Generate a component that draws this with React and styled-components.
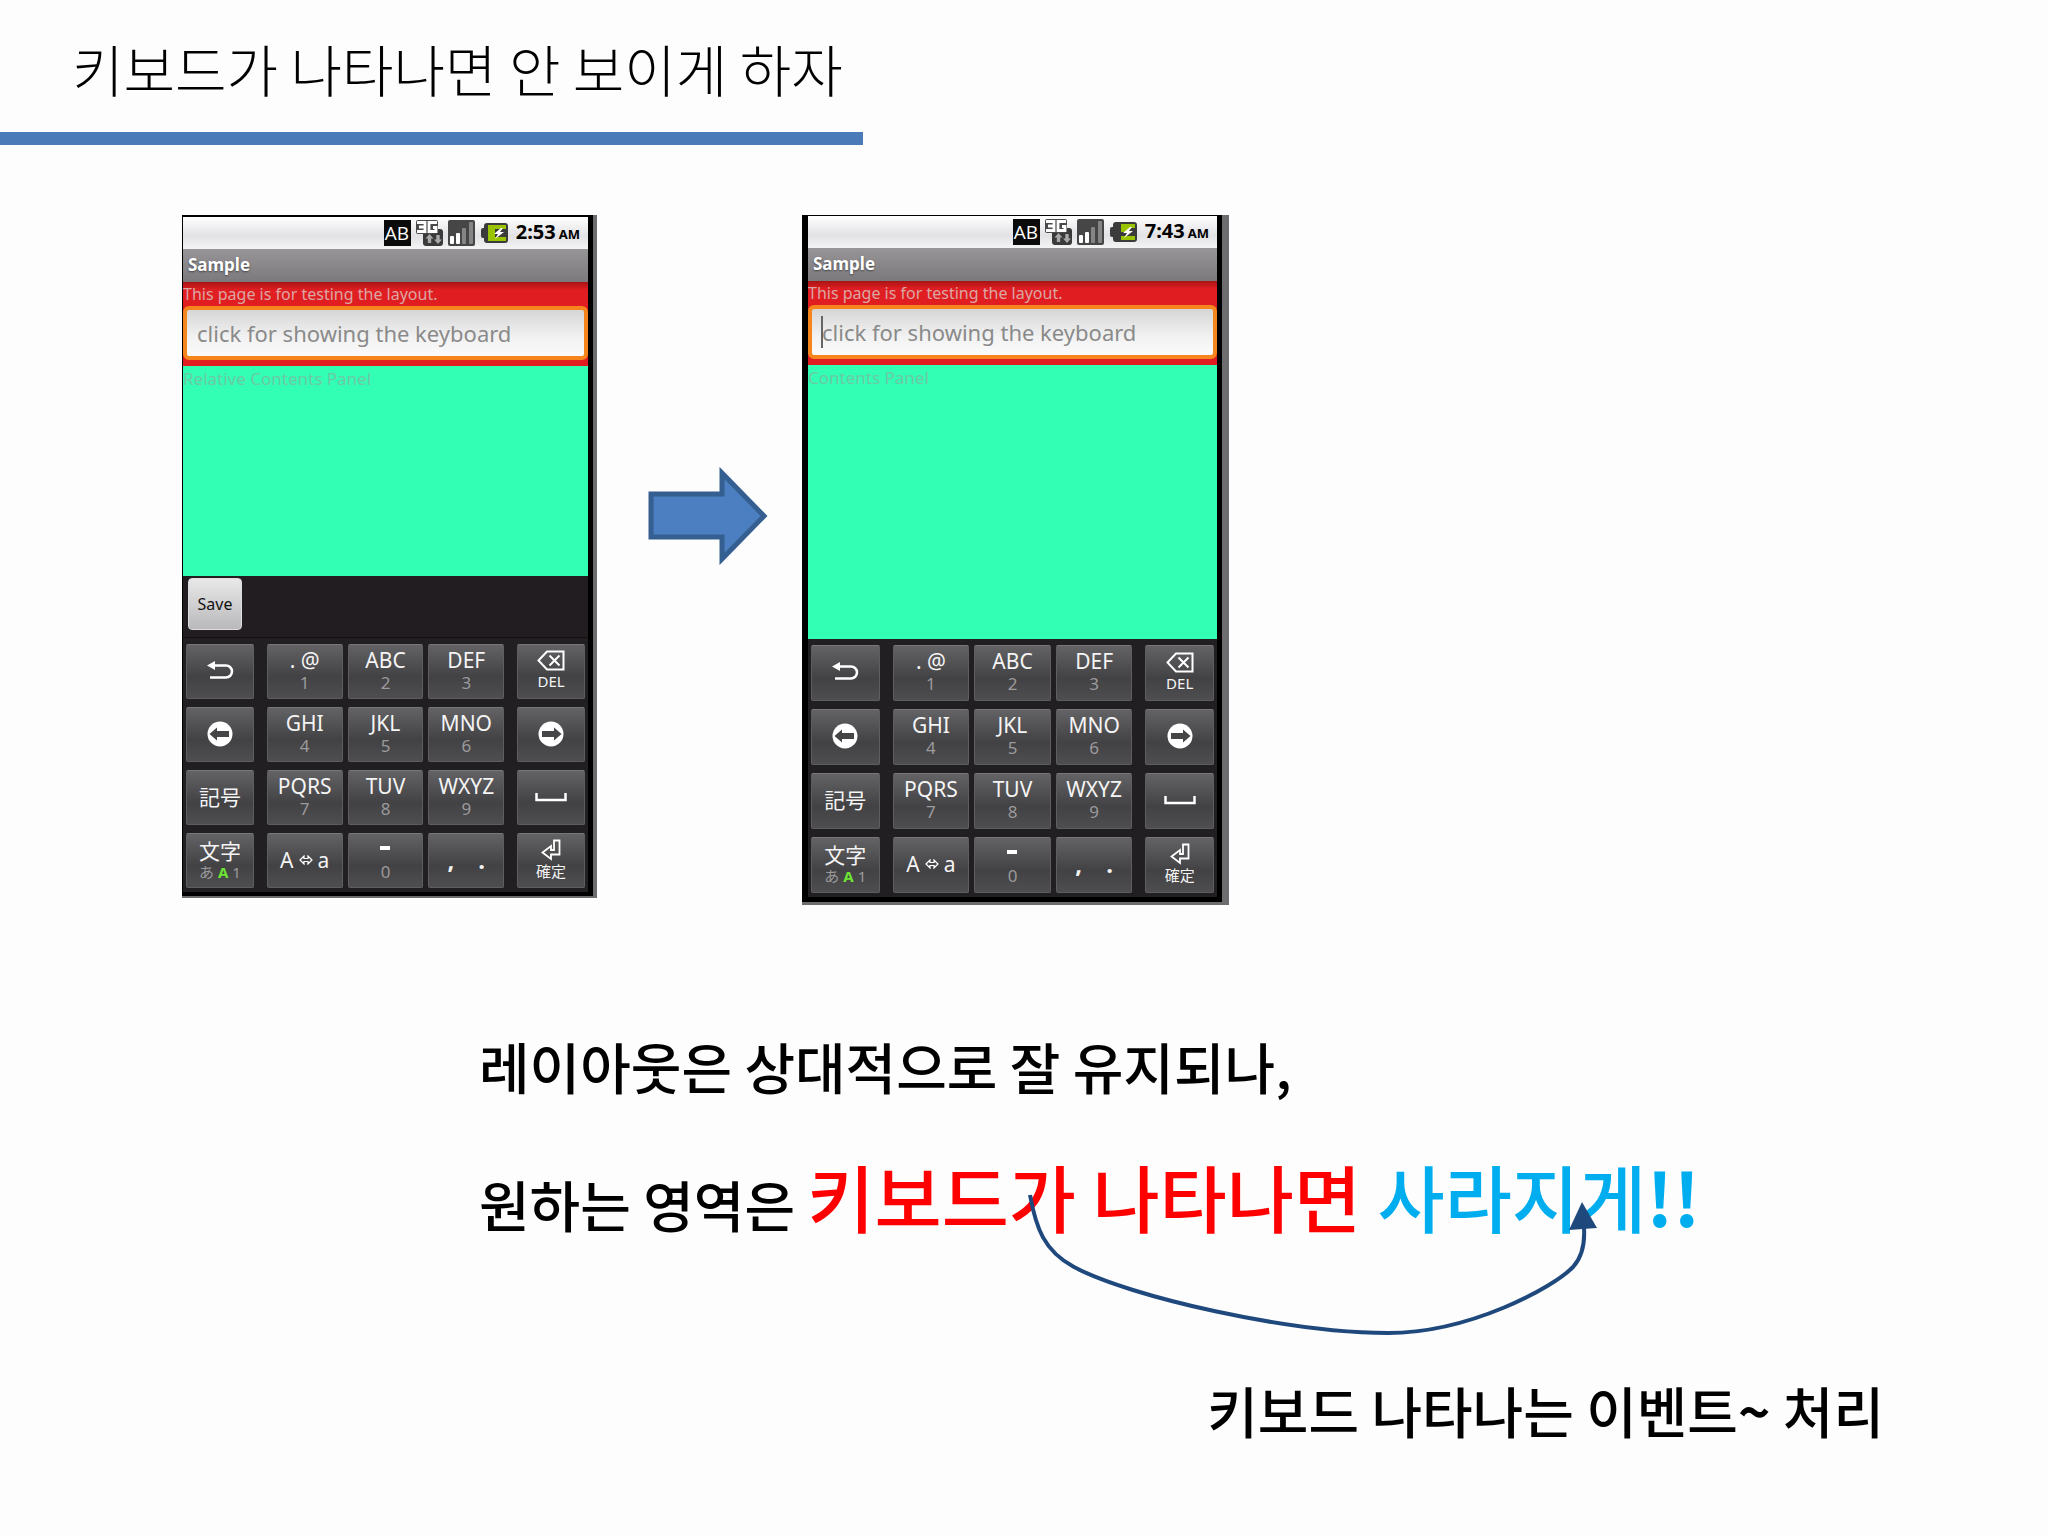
import React from "react";
import styled, { createGlobalStyle, css } from "styled-components";

const GlobalStyle = createGlobalStyle`
  body {
    margin: 0;
    background-color: #fdfdfd;
  }

  * {
    box-sizing: border-box;
  }
`;

const keys = [
  { icon: "back", label: "Back" },
  { main: ". @", sub: "1" },
  { main: "ABC", sub: "2" },
  { main: "DEF", sub: "3" },
  { icon: "del", caption: "DEL" },
  { icon: "left", label: "Left" },
  { main: "GHI", sub: "4" },
  { main: "JKL", sub: "5" },
  { main: "MNO", sub: "6" },
  { icon: "right", label: "Right" },
  { main: "記号" },
  { main: "PQRS", sub: "7" },
  { main: "TUV", sub: "8" },
  { main: "WXYZ", sub: "9" },
  { icon: "space", label: "Space" },
  { main: "文字", modes: true },
  { swap: true },
  { icon: "dash", label: "Dash", sub: "0" },
  { punctuation: true },
  { icon: "enter", caption: "確定" },
];

const KeyIcon = ({ name }) => {
  switch (name) {
    case "back":
      return (
        <svg width="28" height="22" viewBox="0 0 28 22">
          <path
            d="M7 5.500H20a5 5 0 0 1 0 12H4"
            fill="none"
            stroke="#fff"
            strokeWidth="2.500"
          />
          <path d="M1 5.500 9 1v9z" fill="#fff" />
        </svg>
      );
    case "del":
      return (
        <svg width="28" height="21" viewBox="0 0 28 21">
          <path
            d="M1.500 10.500 10 1.500h16.500v18H10zM12.500 5.500l10 10M22.500 5.500l-10 10"
            fill="none"
            stroke="#fff"
            strokeWidth="2"
          />
        </svg>
      );
    case "left":
    case "right":
      return (
        <svg width="26" height="26" viewBox="0 0 26 26">
          <circle cx="13" cy="13" r="12.500" fill="#fff" />
          <path
            d={
              name === "left"
                ? "M2.500 13 10 6.500V10h12v6H10v3.500z"
                : "M23.500 13 16 6.500V10H4v6h12v3.500z"
            }
            fill="#454446"
          />
        </svg>
      );
    case "space":
      return (
        <svg width="32" height="10" viewBox="0 0 32 10">
          <path
            d="M1.500 1v7h29V1"
            fill="none"
            stroke="#fff"
            strokeWidth="2.500"
          />
        </svg>
      );
    case "dash":
      return (
        <svg width="10" height="24" viewBox="0 0 10 24">
          <path d="M0 9h10v4H0z" fill="#fff" />
        </svg>
      );
    default:
      return (
        <svg width="20" height="22" viewBox="0 0 20 22">
          <path
            d="M13 1.500h5.500v14H10V20L1.500 13.500 10 7v4h3z"
            fill="none"
            stroke="#fff"
            strokeWidth="1.800"
          />
        </svg>
      );
  }
};

const StatusIcons = ({ low }) => (
  <svg width="124" height="28" viewBox="0 0 124 28" aria-hidden="true">
    <rect y="1" width="27" height="26" fill="#0b0b0b" />
    <text
      x="13"
      y="21"
      textAnchor="middle"
      fontFamily="Open Sans, sans-serif"
      fontSize="19"
      fill="#fff"
    >
      AB
    </text>
    <rect x="39" y="10" width="20" height="17" rx="3" fill="#3a3a3a" />
    <rect x="32" y="1" width="22" height="14" rx="2" fill="#4a4a4a" />
    <path
      d="M33 3.500h8v9h-8M35 8h6M53 3.500h-8v9h7V8.500h-3"
      fill="none"
      stroke="#fff"
      strokeWidth="2.800"
    />
    <path
      d="M45.500 15l4 4.500h-2.300V24h-3.400v-4.500h-2.300zM54 25l-4-4.500h2.300V16h3.400v4.500H58z"
      fill="#a8a8a8"
    />
    <rect x="64" y="1" width="27" height="26" rx="2" fill="#464646" />
    <rect x="66" y="17" width="4" height="8" rx="1" fill="#fff" />
    <rect x="72" y="14" width="4" height="11" rx="1" fill="#fff" />
    <rect x="78" y="9" width="4" height="16" rx="1" fill="#858585" />
    <rect x="85" y="3" width="4" height="22" rx="1" fill="#858585" />
    <path
      d="M100 7q0-3 3-3h18q3 0 3 3v14q0 3-3 3h-18q-3 0-3-3v-2h-1q-2 0-2-2v-6q0-2 2-2h1z"
      fill="#3b3b3b"
    />
    <path
      d={
        low
          ? "M108 6h14v4h-6l-4 4h-4zM108 22h14v-4h-14z"
          : "M104 6h18v4h-11v8h11v4h-18z"
      }
      fill="#9bc400"
    />
    <path d="M117 9l-7 6h4l-3 5 9-7h-4l3-4z" fill="#fff" />
  </svg>
);

const Keyboard = ({ roomy }) => (
  <Keys $roomy={roomy}>
    {keys.map((key, index) => (
      <Key key={index} type="button" aria-label={key.label}>
        {key.icon && <KeyIcon name={key.icon} />}
        {key.main && <KeyMain>{key.main}</KeyMain>}
        {key.sub && <KeySub>{key.sub}</KeySub>}
        {key.caption && <KeyCaption>{key.caption}</KeyCaption>}
        {key.modes && (
          <KeyModes>
            <span>あ</span>
            <b>A</b>
            <span>1</span>
          </KeyModes>
        )}
        {key.swap && (
          <KeyRow>
            <KeyMain>A</KeyMain>
            <svg width="14" height="10" viewBox="0 0 14 10">
              <path
                d="M1 5l4-4v2.500h4V1l4 4-4 4V6.500H5V9z"
                fill="none"
                stroke="#fff"
                strokeWidth="1.200"
              />
            </svg>
            <KeyMain>a</KeyMain>
          </KeyRow>
        )}
        {key.punctuation && (
          <KeyRow $wide>
            <b>,</b>
            <b>.</b>
          </KeyRow>
        )}
      </Key>
    ))}
  </Keys>
);

const Phone = ({ id, time, panel, focused, low, withSave }) => (
  <Device $wide={focused}>
    <Screen>
      <StatusBar>
        <StatusIcons low={low} />
        <Clock>
          {time}
          <small>AM</small>
        </Clock>
      </StatusBar>
      <AppBar>Sample</AppBar>
      <Form>
        <label htmlFor={id}>This page is for testing the layout.</label>
        <Field>
          {focused && <Caret />}
          <input id={id} placeholder="click for showing the keyboard" />
        </Field>
      </Form>
      <Panel $tall={!withSave}>{panel}</Panel>
      {withSave && (
        <Footer>
          <SaveButton type="button">Save</SaveButton>
        </Footer>
      )}
      <Keyboard roomy={!withSave} />
    </Screen>
  </Device>
);

const App = () => (
  <Slide>
    <GlobalStyle />
    <Header>
      <h1>키보드가 나타나면 안 보이게 하자</h1>
    </Header>
    <Phones>
      <Phone
        id="before"
        time="2:53"
        panel="Relative Contents Panel"
        withSave
      />
      <ArrowBox>
        <svg width="120" height="98" viewBox="0 0 120 98">
          <path
            d="M3 27h71V6l42 43-42 43V70H3z"
            fill="#4b7fc1"
            stroke="#365f91"
            strokeWidth="5"
          />
        </svg>
      </ArrowBox>
      <Phone id="after" time="7:43" panel="Contents Panel" focused low />
    </Phones>
    <Notes>
      <p>레이아웃은 상대적으로 잘 유지되나,</p>
      <p>
        원하는 영역은 <Accent $color="#ff0000">키보드가 나타나면 </Accent>
        <Accent $color="#00aeef">
          사라지게<b>!!</b>
        </Accent>
        <Curve width="580" height="150" viewBox="0 0 580 150">
          <path
            d="M6 5C12 38 20 61 50 77C106 107 266 143 364 143C446 143 530 97 549 77C558 67 561 54 560 38"
            fill="none"
            stroke="#1f497d"
            strokeWidth="4"
          />
          <path d="M558 12l15 26-28 2z" fill="#1f497d" />
        </Curve>
      </p>
      <Closing>
        키보드 나타나는 이벤트<b>~</b> 처리
      </Closing>
    </Notes>
  </Slide>
);

const Slide = styled.main`
  min-height: 100vh;
  color: #000;
  font-family: "Noto Sans CJK KR", sans-serif;
`;

const Header = styled.header`
  display: inline-block;
  padding: 28px 20px 24px 72px;
  border-bottom: 13px solid #4a7ab8;

  h1 {
    margin: 0;
    font-size: 56px;
    font-weight: 300;
    line-height: 80px;
    white-space: nowrap;
  }
`;

const Phones = styled.section`
  display: grid;
  grid-template-columns: 415fr 205fr 427fr 819fr;
  align-items: start;
  padding: 70px 0 0 182px;
`;

const Device = styled.article`
  border-style: solid;
  border-color: #6d6c6e;
  border-width: ${({ $wide }) => ($wide ? "0 7px 3px 0" : "0 4px 2px 0")};
  background-color: #000;
  padding: ${({ $wide }) => ($wide ? "1px 5px 5px 6px" : "2px 5px 4px 1px")};
`;

const Screen = styled.div`
  background-color: #221f22;
  font-family: "Noto Sans", "Noto Sans CJK JP", sans-serif;
`;

const StatusBar = styled.div`
  display: flex;
  justify-content: flex-end;
  align-items: center;
  gap: 8px;
  height: 32px;
  padding-right: 8px;
  background: linear-gradient(#fff, #e2e1e4 60%, #f4f4f5);
`;

const Clock = styled.span`
  display: flex;
  align-items: baseline;
  gap: 3px;
  font-size: 20px;
  font-weight: 700;
  line-height: 32px;

  small {
    font-size: 13px;
  }
`;

const AppBar = styled.div`
  height: 33px;
  padding-left: 5px;
  background: linear-gradient(#979598, #7b797c);
  color: #fff;
  font-size: 17px;
  font-weight: 700;
  line-height: 31px;
  text-shadow: 0 1px 2px #444;
`;

const Form = styled.div`
  height: 84px;
  background: linear-gradient(#a81414, #e01e22 8px);

  label {
    display: block;
    color: #dba6a2;
    font-size: 16px;
    line-height: 24px;
  }
`;

const Field = styled.div`
  position: relative;
  height: 54px;
  border: 4px solid #f5851c;
  border-radius: 6px;
  background: linear-gradient(#d6d6d6, #f2f2f2 60%, #fafafa);

  input {
    width: 100%;
    height: 100%;
    padding: 0 10px;
    border: 0;
    outline: 0;
    background: transparent;
    font-family: inherit;
    font-size: 22px;
  }

  input::placeholder {
    color: #8a8a8a;
    opacity: 1;
  }
`;

const Caret = styled.span`
  position: absolute;
  top: 7px;
  bottom: 7px;
  left: 9px;
  width: 2px;
  background-color: #666;
`;

const Panel = styled.div`
  height: ${({ $tall }) => ($tall ? "274px" : "210px")};
  background-color: #32ffb4;
  color: #6cc9a6;
  font-size: 17px;
  line-height: 26px;
`;

const Footer = styled.div`
  height: 62px;
  padding: 2px 5px;
  border-bottom: 1px solid #111;
  background-color: #211d20;
`;

const SaveButton = styled.button`
  width: 54px;
  height: 52px;
  padding: 0;
  border: 1px solid #ddd;
  border-radius: 4px;
  background: linear-gradient(#e8e8e9, #b9b9bb);
  color: #111;
  font-family: inherit;
  font-size: 16px;
`;

const Keys = styled.div`
  display: grid;
  grid-template-columns: repeat(5, 1fr);
  grid-auto-rows: ${({ $roomy }) => ($roomy ? "56px" : "55px")};
  gap: 8px 5px;
  padding: 6px 3px 4px;
`;

const keyText = css`
  color: #f4f4f4;
  line-height: 24px;
`;

const Key = styled.button`
  display: flex;
  flex-direction: column;
  align-items: center;
  justify-content: center;
  min-width: 0;
  padding: 0 0 2px;
  border: 1px solid #5e5d5f;
  border-top-color: #77767a;
  border-radius: 2px;
  background: linear-gradient(#636264, #424143 60%, #4e4d4f);
  font-family: inherit;

  &:nth-child(5n + 1) {
    margin-right: 8px;
  }

  &:nth-child(5n) {
    margin-left: 8px;
  }
`;

const KeyMain = styled.span`
  ${keyText}
  font-size: 21px;
`;

const KeySub = styled.span`
  color: #9b9a9c;
  font-size: 17px;
  line-height: 22px;
`;

const KeyCaption = styled.span`
  ${keyText}
  font-size: 15px;
  line-height: 20px;
`;

const KeyModes = styled.span`
  display: flex;
  gap: 4px;
  color: #9b9a9c;
  font-size: 15px;
  line-height: 18px;

  b {
    color: #6de534;
  }
`;

const KeyRow = styled.span`
  ${keyText}
  display: flex;
  align-items: center;
  gap: ${({ $wide }) => ($wide ? "24px" : "5px")};
  font-size: 24px;
`;

const ArrowBox = styled.div`
  display: flex;
  justify-content: center;
  padding: 252px 0 0 16px;
`;

const Notes = styled.section`
  padding: 120px 164px 60px 479px;
  font-size: 55px;
  font-weight: 500;

  p {
    position: relative;
    margin: 0 0 50px;
    line-height: 80px;
    white-space: nowrap;
  }
`;

const Accent = styled.span`
  color: ${({ $color }) => $color};
  font-size: 73px;
`;

const Curve = styled.svg`
  position: absolute;
  top: 35px;
  left: 545px;
`;

const Closing = styled.p`
  padding-top: 76px;
  text-align: right;
`;

export default App;
